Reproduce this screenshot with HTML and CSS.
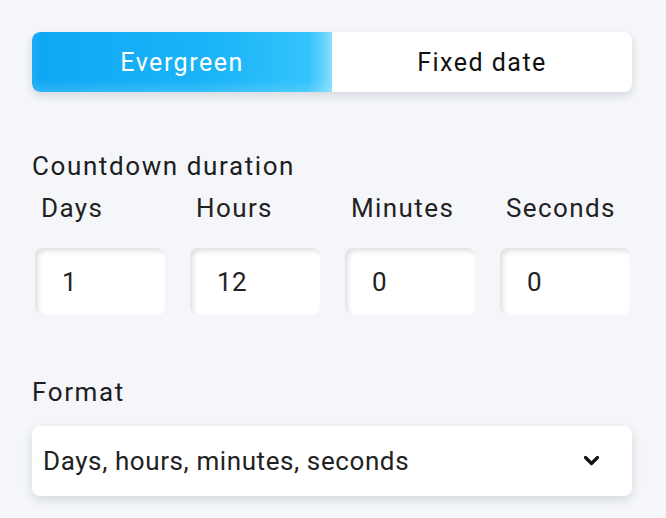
FILE: index.html
```html
<!DOCTYPE html>
<html>
<head>
<meta charset="utf-8">
<link rel="stylesheet" href="styles.css">
</head>
<body>
<div class="panel">
  <div class="toggle">
    <div class="opt active">Evergreen</div>
    <div class="opt">Fixed date</div>
  </div>
  <div class="section-title">Countdown duration</div>
  <div class="grid">
    <div class="field"><div class="lbl">Days</div><div class="inp">1</div></div>
    <div class="field"><div class="lbl">Hours</div><div class="inp">12</div></div>
    <div class="field"><div class="lbl">Minutes</div><div class="inp">0</div></div>
    <div class="field"><div class="lbl">Seconds</div><div class="inp">0</div></div>
  </div>
  <div class="format-title">Format</div>
  <div class="select">
    <span>Days, hours, minutes, seconds</span>
    <svg class="chev" width="17" height="12" viewBox="0 0 17 12"><path d="M2.5 2.5 L8.5 8.5 L14.5 2.5" fill="none" stroke="#111" stroke-width="3.2" stroke-linecap="round" stroke-linejoin="round"/></svg>
  </div>
</div>
</body>
</html>
```
FILE: styles.css
```css
html, body { margin: 0; padding: 0; }
body {
  background: #f4f6f9;
  font-family: Roboto, "Liberation Sans", sans-serif;
  color: #1c1e21;
  width: 666px;
  height: 518px;
  overflow: hidden;
}
.panel { padding: 32px 34px 0 32px; }
.toggle {
  display: flex;
  height: 60px;
  border-radius: 8px;
  background: #fff;
  box-shadow: 0 4px 8px rgba(30, 40, 60, 0.14);
  overflow: hidden;
}
.opt {
  flex: 1;
  display: flex;
  align-items: center;
  justify-content: center;
  font-size: 25px;
  letter-spacing: 1.5px;
  color: #111;
}
.opt.active {
  color: #fff;
  background: linear-gradient(90deg, #0ea7f4 0%, #1ab4f8 60%, #33c3fb 92%, #7fdcfd 100%);
  box-shadow: inset 0 -6px 10px rgba(255,255,255,0.15);
  border-radius: 8px 0 0 8px;
}
.section-title {
  margin-top: 56px;
  font-size: 26px;
  line-height: 36px;
  letter-spacing: 1.6px;
  color: #1c1e21;
}
.grid {
  display: grid;
  grid-template-columns: repeat(4, 130px);
  column-gap: 25px;
  margin-left: 3px;
}
.lbl {
  font-size: 26px;
  line-height: 32px;
  margin-top: 8px;
  margin-left: 6px;
  letter-spacing: 1.4px;
  color: #222;
}
.inp {
  margin-top: 24px;
  height: 67px;
  background: #fff;
  border-radius: 8px;
  box-shadow: inset 3px 3px 5px rgba(0,0,0,0.12);
  display: flex;
  align-items: center;
  padding-left: 27px;
  font-size: 26px;
  letter-spacing: 0.5px;
  color: #222;
}
.format-title {
  margin-top: 60px;
  font-size: 26px;
  line-height: 34px;
  letter-spacing: 1.6px;
  color: #1c1e21;
}
.select {
  margin-top: 17px;
  height: 70px;
  background: #fff;
  border-radius: 8px;
  box-shadow: 0 4px 10px rgba(30, 40, 60, 0.14);
  display: flex;
  align-items: center;
  justify-content: space-between;
  padding: 0 32px 0 11px;
  font-size: 26px;
  letter-spacing: 0.6px;
  color: #222;
}
.chev { display: block; }
```
